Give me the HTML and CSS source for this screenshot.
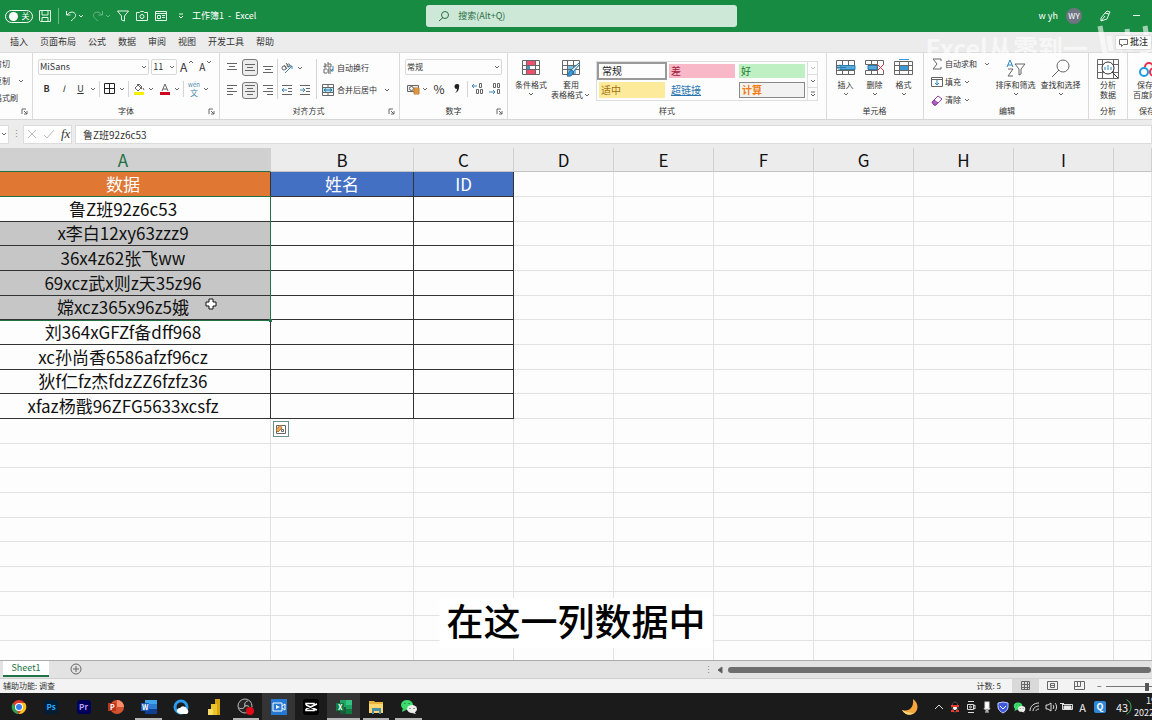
FILE: index.html
```html
<!DOCTYPE html>
<html lang="zh-CN">
<head>
<meta charset="UTF-8">
<title>工作簿1 - Excel</title>
<link rel="stylesheet" href="styles.css">
</head>
<body>

<svg class="defs">
    <symbol id="chev" viewBox="0 0 8 8"><path d="M2 3l2 2 2-2"/></symbol>
    <symbol id="launch" viewBox="0 0 7 7"><path d="M1 6V1h4M3 3l3 3M6 3v3H3"/></symbol>
    <symbol id="wechat" viewBox="0 0 18 18">
        <ellipse cx="7" cy="7" rx="6" ry="5" fill="#3ddb6b" stroke="none"/><path d="M3 10l-1 4 4-2z" fill="#3ddb6b" stroke="none"/>
        <ellipse cx="12" cy="11" rx="5" ry="4" fill="#eee" stroke="none"/><path d="M14 13l2 3-4-1z" fill="#eee" stroke="none"/>
        <path d="M5 5v1M9 5v1M10 10v1M14 10v1" stroke="#145c2c"/>
    </symbol>
</svg>

<header class="titlebar">
    <div class="quick">
        <button class="toggle" aria-label="自动保存"><span class="knob"></span>关</button>
        <button aria-label="保存"><svg width="12" height="12" viewBox="0 0 12 12"><path d="M.5.5h11v11h-10l-1-1zM3 1v4h6V1M3 11V7.500h6V11"/></svg></button>
        <span class="line"></span>
        <button class="undo" aria-label="撤消"><svg width="12" height="12" viewBox="0 0 12 12"><path d="M1.500 1v4h4M2 5c2-3 6-4 8-1.500s-1 5-4 7.500"/></svg><svg class="chev"><use href="#chev"/></svg></button>
        <button class="redo" aria-label="恢复"><svg width="12" height="12" viewBox="0 0 12 12"><path d="M10.500 1v4h-4M10 5C8 2 4 1 2 3.500s1 5 4 7.500"/></svg><svg class="chev"><use href="#chev"/></svg></button>
        <button aria-label="筛选"><svg width="12" height="12" viewBox="0 0 12 12"><path d="M.5 1h11L7.500 6v5l-3-1V6z"/></svg></button>
        <button aria-label="照相机"><svg width="12" height="12" viewBox="0 0 12 12"><path d="M.5 2.500h3l1-1h3l1 1h3v8H.5z"/><circle cx="6" cy="6.500" r="2"/></svg></button>
        <button aria-label="表单"><svg width="12" height="12" viewBox="0 0 12 12"><path d="M.5 1.500h11v9H.5zM.5 3.500h11M2.500 5.500h3v3h-3zM7 5.500h3M7 7.500h3"/></svg></button>
        <button class="more" aria-label="自定义"><svg width="8" height="8" viewBox="0 0 8 8"><path d="M2 2h4M2 4l2 2 2-2"/></svg></button>
        <h1>工作簿1&nbsp; -&nbsp; Excel</h1>
    </div>
    <label class="search">
        <svg width="12" height="12" viewBox="0 0 12 12"><circle cx="7" cy="5" r="3.500"/><path d="M5 7.500L1 11"/></svg>
        <input type="text" placeholder="搜索(Alt+Q)" aria-label="搜索">
    </label>
    <div class="account">
        <span>w yh</span>
        <span class="avatar">WY</span>
        <button aria-label="墨迹"><svg width="12" height="12" viewBox="0 0 12 12"><path d="M2 8l4-5 4 1-2 5-6 2zM6 3l2-2 3 1-1 2M2 11l4-5"/></svg></button>
        <button aria-label="最小化"><svg width="12" height="12" viewBox="0 0 12 12"><path d="M3 5.500h7"/></svg></button>
    </div>
</header>

<nav class="tabs">
    <a href="#">插入</a><a href="#">页面布局</a><a href="#">公式</a><a href="#">数据</a><a href="#">审阅</a><a href="#">视图</a><a href="#">开发工具</a><a href="#">帮助</a>
    <button class="comments"><svg width="9" height="9" viewBox="0 0 9 9"><path d="M.5 1.500h8v5h-4l-2 2v-2h-2z"/></svg>批注</button>
    <div class="watermark">Excel从零到一</div>
    <svg class="bili" width="56" height="40" viewBox="0 0 56 40"><path d="M4 3l5 28M13 13l2 15M31 6l3 22M49 3l4 26M22 14l2 14" /><path d="M10 32h8v5M24 30l4 7M36 30v7M44 31h8"/></svg>
</nav>

<section class="ribbon">
    <div class="group clipboard">
        <div class="body col">
            <button>剪切</button>
            <button>复制<svg class="chev"><use href="#chev"/></svg></button>
            <button>格式刷</button>
        </div>
        <footer><svg class="launch"><use href="#launch"/></svg></footer>
    </div>

    <div class="group font">
        <div class="body">
            <div class="row">
                <label class="drop family"><select aria-label="字体"><option>MiSans</option></select><svg class="chev"><use href="#chev"/></svg></label>
                <label class="drop size"><select aria-label="字号"><option>11</option></select><svg class="chev"><use href="#chev"/></svg></label>
                <button class="tool grow">A<svg class="chev"><path d="M2 4l2-2 2 2"/></svg></button>
                <button class="tool shrink">A<svg class="chev"><path d="M2 2l2 2 2-2"/></svg></button>
            </div>
            <div class="row spaced">
                <span><button class="tool"><b>B</b></button><button class="tool"><i>I</i></button><button class="tool"><u>U</u></button><svg class="chev"><use href="#chev"/></svg></span>
                <span class="line"></span>
                <span><button class="pic" aria-label="边框"><svg width="12" height="12" viewBox="0 0 12 12"><path d="M.5.5h10v10H.5zM5.500.5v10M.5 5.500h10" stroke="#222"/></svg></button><svg class="chev"><use href="#chev"/></svg></span>
                <span class="line"></span>
                <span><button class="pic" aria-label="填充颜色"><svg width="12" height="12" viewBox="0 0 12 12"><path d="M6 1L2 5l3 3 4-4zM4 1l5 5M10 5l1 2"/><path d="M1 9h10v3H1z" fill="#f8f000" stroke="none"/></svg></button><svg class="chev"><use href="#chev"/></svg></span>
                <span><button class="pic" aria-label="字体颜色"><svg width="12" height="12" viewBox="0 0 12 12"><path d="M3 8l3-7 3 7M4 6h4"/><path d="M1 9h10v3H1z" fill="#d0021b" stroke="none"/></svg></button><svg class="chev"><use href="#chev"/></svg></span>
                <span class="line"></span>
                <span><button class="pic wen"><small>wén</small>文</button><svg class="chev"><use href="#chev"/></svg></span>
            </div>
        </div>
        <footer>字体<svg class="launch"><use href="#launch"/></svg></footer>
    </div>

    <div class="group align">
        <div class="body side">
            <div class="three">
                <button aria-label="顶端对齐"><svg width="12" height="12" viewBox="0 0 12 12"><path d="M1 1.500h10M3 4.500h6M1 7.500h10"/></svg></button>
                <button class="on" aria-label="垂直居中"><svg width="12" height="12" viewBox="0 0 12 12"><path d="M1 2.500h10M3 5.500h6M1 8.500h10"/></svg></button>
                <button aria-label="底端对齐"><svg width="12" height="12" viewBox="0 0 12 12"><path d="M1 4.500h10M3 7.500h6M1 10.500h10"/></svg></button>
                <button aria-label="左对齐"><svg width="12" height="12" viewBox="0 0 12 12"><path d="M1 1.500h10M1 4.500h6M1 7.500h10M1 10.500h6"/></svg></button>
                <button class="on" aria-label="居中"><svg width="12" height="12" viewBox="0 0 12 12"><path d="M1 1.500h10M3 4.500h6M1 7.500h10M3 10.500h6"/></svg></button>
                <button aria-label="右对齐"><svg width="12" height="12" viewBox="0 0 12 12"><path d="M1 1.500h10M5 4.500h6M1 7.500h10M5 10.500h6"/></svg></button>
            </div>
            <span class="line tall"></span>
            <div class="two">
                <button aria-label="方向"><svg width="12" height="12" viewBox="0 0 12 12"><circle cx="3" cy="6" r="2"/><path d="M3 3l3 4M5 1l3 4"/><circle cx="7.500" cy="3.500" r="1.500"/><path d="M4 11l7-7M8 4h3v3" stroke="#3b87b5"/></svg></button>
                <svg class="chev"><use href="#chev"/></svg>
                <button aria-label="减少缩进"><svg width="12" height="12" viewBox="0 0 12 12"><path d="M1 1.500h10M7 4.500h4M7 7.500h4M1 10.500h10"/><path d="M6 6H1l2-2M1 6l2 2" stroke="#3b87b5"/></svg></button>
                <button aria-label="增加缩进"><svg width="12" height="12" viewBox="0 0 12 12"><path d="M1 1.500h10M7 4.500h4M7 7.500h4M1 10.500h10"/><path d="M1 6h5L4 4M6 6L4 8" stroke="#3b87b5"/></svg></button>
            </div>
            <span class="line tall"></span>
            <div class="wraps">
                <button><svg width="14" height="12" viewBox="0 0 14 12"><path d="M3 2h2v3H3V4h2M7 0v5h3V2H7M6 7H3v4h3M7 9h3V7H7v4h3"/><path d="M12 4v5h-2l2-2" stroke="#3b87b5"/></svg>自动换行</button>
                <button><svg width="14" height="12" viewBox="0 0 14 12"><path d="M2 3h10v6H2z" fill="#b9e1f2" stroke="none"/><path d="M1.500.5h11v11h-11zM1.500 3.500h11M1.500 8.500h11M7 .5v3M7 8.500v3"/><path d="M3 6h8M5 4.500L3 6l2 1.500M9 4.500L11 6 9 7.500" stroke="#23799f"/></svg>合并后居中<svg class="chev last"><use href="#chev"/></svg></button>
            </div>
        </div>
        <footer>对齐方式<svg class="launch"><use href="#launch"/></svg></footer>
    </div>

    <div class="group number">
        <div class="body">
            <div class="row"><label class="drop format"><select aria-label="数字格式"><option>常规</option></select><svg class="chev"><use href="#chev"/></svg></label></div>
            <div class="row spaced">
                <span><button class="pic" aria-label="会计格式"><svg width="13" height="12" viewBox="0 0 13 12"><path d="M.5 2.500h11v6H.5z" fill="#eee"/><circle cx="4.500" cy="5.500" r="2"/><path d="M7 5h5v6H7z" fill="#f5b25d" stroke="#c27b2b"/><path d="M7 7h5M7 9h5" stroke="#c27b2b"/></svg></button><svg class="chev"><use href="#chev"/></svg></span>
                <button class="tool pct">%</button>
                <button class="tool" aria-label="千位分隔"><svg width="8" height="12" viewBox="0 0 8 12"><path d="M4 1a2 2 0 0 1 2 3c0 3-1 5-4 6 1-1 2-2 2-4a2 2 0 1 1 0-5z" fill="#222" stroke="none"/></svg></button>
                <span class="line"></span>
                <button class="pic" aria-label="增加小数位数"><svg width="12" height="12" viewBox="0 0 12 12"><path d="M8.500.5h2v4h-2zM5.500 6.500h2v4h-2zM9.500 6.500h2v4h-2z"/><path d="M6 3H1l2-2M1 3l2 2" stroke="#3b87b5"/></svg></button>
                <button class="pic" aria-label="减少小数位数"><svg width="12" height="12" viewBox="0 0 12 12"><path d="M5.500.5h2v4h-2zM9.500.5h2v4h-2zM9.500 6.500h2v4h-2z"/><path d="M1 9h6L5 7M7 9l-2 2" stroke="#3b87b5"/></svg></button>
            </div>
        </div>
        <footer>数字<svg class="launch"><use href="#launch"/></svg></footer>
    </div>

    <div class="group styles">
        <div class="body side">
            <button class="tile"><svg width="20" height="18" viewBox="0 0 20 18"><path d="M5 2h9v5H5z" fill="#f0506e" stroke="none"/><path d="M5 7h4v4H5z" fill="#4d8fc7" stroke="none"/><path d="M5 11h10v5H5z" fill="#f0506e" stroke="none"/><path d="M1.500 1.500h17v14h-17zM1.500 6.500h17M1.500 10.500h17M5.500 1.500v14M14.500 1.500v14"/></svg>条件格式<svg class="chev"><use href="#chev"/></svg></button>
            <button class="tile"><svg width="20" height="18" viewBox="0 0 20 18"><path d="M7 7h8v8H7z" fill="#79bde6" stroke="none"/><path d="M1.500 1.500h17v14h-17zM1.500 6.500h17M1.500 10.500h17M6.500 1.500v14M12.500 1.500v14"/><path d="M19 5l-7 8-2-2 8-7z" fill="#e8f4fb" stroke="#2b6f9e"/><path d="M11 11c-3 0-3 4-5 6 4 1 6-1 6-4z" fill="#3b9bd6" stroke="#2b6f9e"/></svg>套用<span>表格格式<svg class="chev"><use href="#chev"/></svg></span></button>
            <div class="gallery">
                <div class="swatches">
                    <button class="normal">常规</button><button class="bad">差</button><button class="good">好</button>
                    <button class="neutral">适中</button><button class="link">超链接</button><button class="calc">计算</button>
                </div>
                <div class="scroller">
                    <button aria-label="上"><svg class="chev dim"><use href="#chev"/></svg></button>
                    <button aria-label="下"><svg class="chev"><use href="#chev"/></svg></button>
                    <button aria-label="其他"><svg width="8" height="8" viewBox="0 0 8 8"><path d="M2 2h4M2 4l2 2 2-2"/></svg></button>
                </div>
            </div>
        </div>
        <footer>样式</footer>
    </div>

    <div class="group cells">
        <div class="body side">
            <button class="tile"><svg width="20" height="18" viewBox="0 0 20 18"><path d="M.5 1.500h18v14H.5zM.5 6.500h18M.5 11.500h18M6.500 1.500v14M12.500 1.500v14"/><path d="M4 6.500h15v4H4z" fill="#55a9dc" stroke="#2b7aa8"/><path d="M10 8.500H1l3-3M1 8.500l3 3" stroke="#2b7aa8"/></svg>插入<svg class="chev"><use href="#chev"/></svg></button>
            <button class="tile"><svg width="20" height="18" viewBox="0 0 20 18"><path d="M.5 5.500v-4h18v4M.5 11.500v4h18v-4M6.500 1.500v14M12.500 1.500v14M.5 5.500h12M.5 11.500h12"/><path d="M3 6.500h9v4H3z" fill="#55a9dc" stroke="#2b7aa8"/><path d="M12 5l7 7M19 5l-7 7" stroke="#d9354a"/></svg>删除<svg class="chev"><use href="#chev"/></svg></button>
            <button class="tile"><svg width="20" height="18" viewBox="0 0 20 18"><path d="M5 .5h10" stroke="#3b9bd6"/><path d="M5 7h10v5H5z" fill="#3b9bd6" stroke="none"/><path d="M.5 2.500h18v13H.5zM.5 6.500h18M.5 11.500h18M5.500 2.500v13M14.500 2.500v13"/></svg>格式<svg class="chev"><use href="#chev"/></svg></button>
        </div>
        <footer>单元格</footer>
    </div>

    <div class="group edit">
        <div class="body side">
            <div class="col">
                <button><svg width="12" height="12" viewBox="0 0 12 12"><path d="M10 3V1H2l4 5-4 5h8V9"/></svg>自动求和<svg class="chev sum"><use href="#chev"/></svg></button>
                <button><svg width="12" height="12" viewBox="0 0 12 12"><path d="M.5 1.500h11v9H.5zM.5 3.500h11"/><path d="M6 4v5M4 7l2 2 2-2" stroke="#2b86c0"/></svg>填充<svg class="chev"><use href="#chev"/></svg></button>
                <button><svg width="12" height="12" viewBox="0 0 12 12"><path d="M1 8l6-6 4 3-6 6H3z" fill="#fff" stroke="#8c3fa0"/><path d="M1 8l2-2 4 3-2 2H3z" fill="#b05cc4" stroke="#8c3fa0"/></svg>清除<svg class="chev"><use href="#chev"/></svg></button>
            </div>
            <button class="tile wide"><svg width="20" height="18" viewBox="0 0 20 18"><path d="M1 8l3-7 3 7M2 6h4" stroke="#2b86c0"/><path d="M2 10h5l-5 7h5M9 5h10l-4 5v5l-2 1v-6z"/></svg>排序和筛选<svg class="chev"><use href="#chev"/></svg></button>
            <button class="tile wide"><svg width="20" height="18" viewBox="0 0 20 18"><circle cx="12" cy="7" r="6"/><path d="M8 11l-7 7"/></svg>查找和选择<svg class="chev"><use href="#chev"/></svg></button>
        </div>
        <footer>编辑</footer>
    </div>

    <div class="group analyse">
        <div class="body side">
            <button class="tile"><svg width="22" height="20" viewBox="0 0 22 20"><path d="M.5.5h21v19H.5zM.5 5.500h21M.5 13.500h21M5.500.5v19M16.500.5v19"/><circle cx="11" cy="9" r="6" fill="#fff" stroke="#333"/><path d="M8 11V8M11 11V6M14 11V8" stroke="#2b86c0"/><path d="M15 13l6 6" stroke="#333"/></svg>分析<span>数据</span></button>
        </div>
        <footer>分析</footer>
    </div>

    <div class="group save">
        <div class="body side">
            <button class="tile"><svg width="22" height="20" viewBox="0 0 22 20"><g stroke-width="2"><circle cx="6" cy="13" r="4" stroke="#1c9be0"/><circle cx="16" cy="13" r="4" stroke="#e5314c"/><path d="M7 8a4 4 0 1 1 8 0" stroke="#e5314c"/></g></svg>保存到<span>百度网盘</span></button>
        </div>
        <footer>保存</footer>
    </div>
</section>

<div class="formula">
    <button class="namebox" aria-label="名称框"><svg class="chev"><use href="#chev"/></svg></button>
    <span class="grip">⋮</span>
    <div class="fx">
        <svg width="10" height="10" viewBox="0 0 10 10"><path d="M1 1l8 8M9 1L1 9"/></svg>
        <svg width="12" height="10" viewBox="0 0 12 10"><path d="M1 6l3 3 7-8"/></svg>
        <button>fx</button>
    </div>
    <input type="text" value="鲁Z班92z6c53" aria-label="编辑栏">
</div>

<main class="sheet">
    <table>
        <colgroup><col class="a"><col class="b"><col span="7" class="c"><col></colgroup>
        <thead>
            <tr><th class="picked">A</th><th>B</th><th>C</th><th>D</th><th>E</th><th>F</th><th>G</th><th>H</th><th>I</th><th></th></tr>
        </thead>
        <tbody id="rows"></tbody>
    </table>
    <p class="caption">在这一列数据中</p>
</main>

<div class="sheetbar">
    <a class="current" href="#">Sheet1</a>
    <button class="add" aria-label="新工作表"><svg width="12" height="12" viewBox="0 0 12 12"><circle cx="6" cy="6" r="5"/><path d="M3 6h6M6 3v6"/></svg></button>
    <div class="hscroll"><span>⋮</span><svg width="6" height="8" viewBox="0 0 6 8"><path d="M5 1v6L1 4z" fill="#555"/></svg><div class="thumb"></div></div>
</div>

<div class="status">
    <span>辅助功能: 调查</span>
    <div class="views">
        <span class="count">计数: 5</span>
        <button class="on" aria-label="普通"><svg width="11" height="10" viewBox="0 0 11 10"><path d="M1.500.5h8v8h-8zM1.500 3.500h8M1.500 6.500h8M4.500.5v8M7.500.5v8"/></svg></button>
        <button aria-label="页面布局"><svg width="11" height="10" viewBox="0 0 11 10"><path d="M.5.5h10v8H.5zM3.500 2.500h4v4h-4zM3.500 4.500h4"/></svg></button>
        <button aria-label="分页预览"><svg width="11" height="10" viewBox="0 0 11 10"><path d="M.5.5h10v8H.5zM3.500.5v5M6.500.5v5M.5 5.500h6"/></svg></button>
        <span class="minus">−</span>
        <div class="zoom"><i></i></div>
    </div>
</div>

<footer class="taskbar">
    <div class="apps">
        <button aria-label="Chrome"><svg width="18" height="18" viewBox="0 0 18 18"><circle cx="9" cy="9" r="7" fill="#e33b2e"/><path d="M3 5l6 11A7 7 0 0 1 3 5z" fill="#2ba24c"/><path d="M9 16A7 7 0 0 0 15 5H9l3 6z" fill="#fbc116"/><circle cx="9" cy="9" r="4" fill="#fff"/><circle cx="9" cy="9" r="3" fill="#3b7ded"/></svg></button>
        <button><span class="adobe ps">Ps</span></button>
        <button><span class="adobe pr">Pr</span></button>
        <button aria-label="PowerPoint"><svg width="18" height="18" viewBox="0 0 18 18"><circle cx="10" cy="9" r="7" fill="#d35230"/><path d="M10 2a7 7 0 0 1 7 7h-7z" fill="#ff8f6b"/><rect x="1" y="5" width="8" height="8" fill="#b7351b"/><text x="3" y="12" class="letter">P</text></svg></button>
        <button class="open" aria-label="Word"><svg width="18" height="18" viewBox="0 0 18 18"><path d="M5 2h12v5H5z" fill="#41a5ee"/><path d="M5 6h12v5H5z" fill="#2b7cd3"/><path d="M5 11h12v5H5z" fill="#103f91"/><rect x="1" y="5" width="8" height="8" fill="#185abd"/><text x="2" y="12" class="letter">W</text></svg></button>
        <button aria-label="QQ浏览器"><svg width="18" height="18" viewBox="0 0 18 18"><circle cx="9" cy="9" r="6" fill="none" stroke="#2a9bea" stroke-width="3"/><path d="M5 14a3 3 0 0 1 3-4 4 4 0 0 1 7 1 3 3 0 0 1 0 5H8z" fill="#fff"/></svg></button>
        <button aria-label="Power BI"><svg width="18" height="18" viewBox="0 0 18 18"><path d="M10 1h5v16h-5z" fill="#d8a511"/><path d="M6 6h6v11H6z" fill="#ecc52c"/><path d="M3 11h5v6H3z" fill="#f9dd62"/></svg></button>
        <button class="open" aria-label="OBS"><svg width="18" height="18" viewBox="0 0 18 18"><circle cx="8" cy="8" r="7" fill="#252525" stroke="#bbb"/><path d="M8 8c-1-3 1-5 3-5M8 8c3-1 5 1 5 3M8 8c-1 3-4 3-6 2" fill="none" stroke="#ccc"/><circle cx="13" cy="13" r="4" fill="#e00b16"/></svg></button>
        <button class="lit" aria-label="录屏"><svg width="18" height="18" viewBox="0 0 18 18"><rect x="1" y="1" width="16" height="16" fill="#2578d4"/><path d="M3 5h9v8H3zM12 8l3-2v6l-3-2" fill="none" stroke="#fff"/><path d="M6 7l4 2-4 2z" fill="#fff"/></svg></button>
        <button aria-label="剪映"><svg width="18" height="18" viewBox="0 0 18 18"><rect x="1" y="1" width="16" height="16" rx="3" fill="#000"/><path d="M4 7V5.500h8V7l3-1M4 11v1.500h8V11l3 1M4 7l11 5M4 11l11-5" fill="none" stroke="#fff" stroke-width="1.500"/></svg></button>
        <button class="lit open" aria-label="Excel"><svg width="18" height="18" viewBox="0 0 18 18"><path d="M5 2h12v14H5z" fill="#21a366"/><path d="M11 2h6v5h-6z" fill="#33c481"/><path d="M11 11h6v5h-6z" fill="#107c41"/><path d="M5 9h6v7H5z" fill="#185c37"/><rect x="1" y="5" width="8" height="8" fill="#107c41"/><text x="3" y="12" class="letter">X</text></svg></button>
        <button class="open" aria-label="资源管理器"><svg width="18" height="18" viewBox="0 0 18 18"><path d="M2 3h5l1 1h8v11H2z" fill="#e8b33c"/><path d="M2 6h14v9H2z" fill="#fcd770"/><path d="M5 10h9v6h-2v-3H7v3H5z" fill="#4a8ea8"/></svg></button>
        <button class="open" aria-label="微信"><svg width="18" height="18"><use href="#wechat"/></svg></button>
    </div>
    <div class="tray">
        <svg class="moon" width="18" height="18" viewBox="0 0 18 18"><path d="M12 1c6 4 6 12 0 15-4 2-9 0-11-4 7 2 12-2 11-11z" fill="#f6a63a"/><path d="M1 12c3 5 8 6 12 3-4 0-8-1-12-3z" fill="#f9d27a"/></svg>
        <svg viewBox="0 0 16 16"><path d="M4 10l4-4 4 4"/></svg>
        <svg viewBox="0 0 16 16"><ellipse cx="8" cy="8" rx="3" ry="5" fill="#111" stroke="#555"/><circle cx="8" cy="9" r="2" fill="#fff" stroke="none"/><path d="M4 7h8M4 12h3M9 12h3" stroke="#e63b2c" stroke-width="2"/></svg>
        <svg viewBox="0 0 16 16"><path d="M5 2.500h6M5 13.500h6M4.500 5.500h6v5h-6zM10 7l2-1v4l-2-1"/><circle cx="7.500" cy="8" r="1"/></svg>
        <svg viewBox="0 0 16 16"><rect x="6" y="3" width="4" height="7" fill="#fff"/><path d="M5 9c1 3 5 3 6 0M8 11v2M6 13h4"/></svg>
        <svg viewBox="0 0 16 16"><path d="M8 3l5 1v4c0 3-3 5-5 6-2-1-5-3-5-6V4z" fill="#3d59dd" stroke="#c4ccff"/><path d="M5 7l3 3 3-3" stroke="#fff"/></svg>
        <svg viewBox="0 0 16 16"><use href="#wechat" x="2" y="2" width="13" height="13"/></svg>
        <svg viewBox="0 0 16 16"><path d="M3 12c0-5 4-8 9-8M6 12c0-3 3-5 6-5M9 12c0-1 1-2 3-2"/></svg>
        <svg viewBox="0 0 16 16"><path d="M3 6h2l3-2v8l-3-2H3zM10 6c1 1 1 3 0 4M12 4c2 2 2 6 0 8"/></svg>
        <svg viewBox="0 0 16 16"><path d="M3.500 5.500h10v5h-10z"/><path d="M5 7h7v3H5z" fill="#eee"/><path d="M1 4.500h4M3.500 4v4"/></svg>
        <span class="ime">A</span>
        <span class="q">Q</span>
        <span class="temp">43<svg viewBox="0 0 22 22"><path d="M16 3a9 9 0 0 1 0 16" stroke="#46c06d"/></svg></span>
        <span class="clock"><span>19</span><span>2022</span></span>
    </div>
</footer>

<script>
const data = ['鲁Z班92z6c53', 'x李白12xy63zzz9', '36x4z62张飞ww', '69xcz武x则z天35z96', '嫦xcz365x96z5娥',
    '刘364xGFZf备dff968', 'xc孙尚香6586afzf96cz', '狄f仁fz杰fdzZZ6fzfz36', 'xfaz杨戬96ZFG5633xcsfz'];
const rows = document.getElementById('rows');
const head = ['数据', '姓名', 'ID'];

for (let r = 0; r < 40; r++) {
    const tr = rows.insertRow();
    for (let c = 0; c < 10; c++) {
        const td = tr.insertCell();
        if (r <= data.length && c < 3) td.classList.add('boxed');
        if (r === 0 && c < 3) {
            td.textContent = head[c];
            td.classList.add(c === 0 ? 'orange' : 'blue');
        } else if (c === 0 && r <= data.length) {
            td.textContent = data[r - 1];
            if (r > 1 && r < 6) td.classList.add('shade');
        }
    }
}

// selection frame, mouse cross and quick analysis button
rows.rows[1].cells[0].insertAdjacentHTML('beforeend', '<div class="selection"></div>');
rows.rows[5].cells[0].insertAdjacentHTML('beforeend', '<svg class="cross" width="12" height="12" viewBox="0 0 12 12"><path d="M4 1h4v3h3v4H8v3H4V8H1V4h3z"/></svg>');
rows.rows[10].cells[1].insertAdjacentHTML('beforeend', '<button class="quickfill" aria-label="自动填充选项"><svg width="12" height="12" viewBox="0 0 12 12"><path d="M1.500 2.500h9v8h-9zM6.500 6.500h2v2h-2z"/><path d="M1 7l4-5 2 3-4 4z" fill="#e9a95e" stroke="#b8772e"/></svg></button>');
</script>

</body>
</html>
```
FILE: styles.css
```css
* {
    box-sizing: border-box;
}
body {
    margin: 0;
    height: 100vh;
    display: flex;
    flex-direction: column;
    overflow: hidden;
    font-family: "Noto Sans CJK SC", sans-serif;
    font-size: 9px;
    line-height: 10px;
    color: #333;
    background: #ececec;
}
button, input, select {
    font: inherit;
    color: inherit;
    border: none;
    background: none;
    padding: 0;
    margin: 0;
}
button {
    display: flex;
    align-items: center;
    justify-content: center;
    white-space: nowrap;
}
a {
    color: inherit;
    text-decoration: none;
}
svg {
    fill: none;
    stroke: #666;
    flex: none;
}
.defs {
    position: absolute;
    width: 0;
    height: 0;
}
.chev {
    width: 8px;
    height: 8px;
}
.dim {
    opacity: 0.4;
}
.line {
    width: 1px;
    height: 16px;
    background: #d4d4d4;
    flex: none;
}

/* title bar */
.titlebar {
    display: grid;
    grid-template-columns: 37% 27% 1fr;
    align-items: center;
    height: 32px;
    flex: none;
    background: #178b41;
    color: #fff;
}
.titlebar svg {
    stroke: #e6f5ea;
}
.quick {
    display: flex;
    align-items: center;
    gap: 7px;
    padding-left: 5px;
}
.quick .line {
    background: #6fb98a;
    margin-right: -1px;
}
.toggle {
    width: 28px;
    height: 13px;
    margin-right: -1px;
    border: 1px solid #fff;
    border-radius: 7px;
    gap: 4px;
    font-size: 8px;
}
.knob {
    width: 9px;
    height: 9px;
    border-radius: 50%;
    background: #fff;
}
.redo {
    opacity: 0.4;
    margin-right: -2px;
}
.more {
    margin: 0 0 0 3px;
}
h1 {
    margin: 0;
    font-size: 9px;
    font-weight: 400;
}
.search {
    display: flex;
    align-items: center;
    gap: 8px;
    height: 22px;
    padding-left: 12px;
    border-radius: 3px;
    background: #cde8d7;
}
.search .titlebar svg, .search svg {
    stroke: #2c6e45;
}
.search input {
    flex: 1;
}
.search input::placeholder {
    color: #2c6e45;
}
.account {
    display: flex;
    align-items: center;
    justify-content: flex-end;
    padding-right: 10px;
}
.account button {
    margin-left: 19px;
}
.avatar {
    width: 16px;
    height: 16px;
    line-height: 16px;
    margin-left: 8px;
    text-align: center;
    border-radius: 50%;
    background: #6e7480;
    font-size: 8px;
}
.account .avatar + button {
    margin-left: 17px;
}

/* ribbon tabs */
.tabs {
    position: relative;
    display: flex;
    align-items: center;
    gap: 12px;
    height: 20px;
    flex: none;
    padding-left: 10px;
    white-space: nowrap;
}
.comments {
    position: relative;
    z-index: 1;
    margin-left: auto;
    width: 37px;
    height: 15px;
    gap: 2px;
    background: #fff;
    border: 1px solid #ddd;
    border-radius: 2px;
    font-weight: 500;
}
.watermark {
    position: absolute;
    right: 64px;
    top: 2px;
    font-size: 25px;
    line-height: 26px;
    font-weight: 700;
    color: #fff;
    opacity: 0.6;
}
.bili {
    position: absolute;
    right: 0;
    top: -9px;
    stroke: #fff;
    stroke-width: 5;
    opacity: 0.6;
}

/* ribbon */
.ribbon {
    display: flex;
    height: 68px;
    flex: none;
    overflow: hidden;
    font-size: 8px;
    background: #fdfdfd;
    border-top: 1px solid #dcdcdc;
    border-bottom: 1px solid #d6d6d6;
}
.group {
    display: flex;
    flex-direction: column;
    flex: none;
    padding: 6px 5px 0;
    position: relative;
    border-right: 1px solid #dadada;
}
.group > footer {
    position: relative;
    margin-top: auto;
    height: 13px;
    text-align: center;
}
.launch {
    position: absolute;
    right: -1px;
    top: 2px;
    width: 7px;
    height: 7px;
}
.body {
    display: flex;
    flex-direction: column;
    gap: 6px;
}
.side {
    flex-direction: row;
    gap: 0;
}
.row {
    display: flex;
    align-items: center;
    height: 16px;
    gap: 2px;
}
.row > span {
    display: flex;
    align-items: center;
}
.col {
    display: flex;
    flex-direction: column;
    gap: 7px;
}
.col button {
    height: 10px;
    gap: 3px;
    justify-content: flex-start;
}
.clipboard {
    width: 33px;
    padding-left: 0;
}
.clipboard .body {
    margin-left: -6px;
}
.clipboard .chev {
    margin-left: 4px;
}
.font {
    width: 187px;
}
.drop {
    position: relative;
    height: 16px;
    border: 1px solid #d8d8d8;
    border-radius: 2px;
}
.drop select {
    appearance: none;
    width: 100%;
    height: 14px;
    padding-left: 1px;
}
.drop .chev {
    position: absolute;
    right: 0;
    top: 3px;
}
.family, .size {
    font-size: 9px;
}
.family {
    width: 114px;
}
.size {
    width: 26px;
}
.format {
    width: 98px;
}
.tool {
    width: 17px;
    height: 16px;
    font-size: 9px;
}
.tool .chev {
    width: 7px;
    align-self: flex-start;
}
.grow {
    font-size: 12px;
}
.shrink {
    font-size: 10px;
}
.pic {
    width: 16px;
    height: 16px;
}
.wen {
    flex-direction: column;
    line-height: 8px;
    font-size: 8px;
    color: #4c8aa8;
}
.wen small {
    font-size: 6px;
    line-height: 8px;
}
.align {
    width: 180px;
    padding-left: 3px;
}
.three {
    display: grid;
    grid-template-columns: 18px 18px 18px;
    gap: 5px 0;
    justify-items: center;
}
.three button {
    width: 16px;
    height: 17px;
}
.three .on {
    border: 1px solid #777;
    border-radius: 3px;
    background: #ececec;
}
.tall {
    height: 40px;
}
.two {
    display: grid;
    grid-template-columns: 18px 18px;
    grid-template-rows: 17px 17px;
    gap: 5px 0;
    padding-right: 2px;
    align-items: center;
}
.wraps {
    display: flex;
    flex-direction: column;
    gap: 5px;
    padding-left: 4px;
}
.wraps button {
    height: 17px;
    gap: 2px;
    justify-content: flex-start;
}
.last {
    margin-left: 4px;
}
.number {
    width: 108px;
}
.tool.pct {
    font-size: 12px;
}
.tile {
    flex-direction: column;
    justify-content: flex-start;
    width: 29px;
}
.tile > svg:first-child {
    margin-bottom: 3px;
}
.tile > span {
    display: flex;
    align-items: center;
}
.tile.wide {
    width: 45px;
}
.styles {
    width: 319px;
}
.styles .tile {
    width: 40px;
}
.styles .tile:first-child {
    width: 36px;
    margin-right: 2px;
}
.gallery {
    display: flex;
    margin: 2px 0 0 5px;
    border: 1px solid #ddd;
    height: 40px;
}
.swatches {
    display: grid;
    grid-template-columns: 70px 70px 70px;
    font-size: 10px;
}
.swatches button {
    justify-content: flex-start;
    margin: 2px;
    padding-left: 2px;
}
.swatches .normal {
    margin: 0;
    padding-left: 3px;
    border: 2px solid #999;
    color: #222;
}
.bad {
    background: #f9b8c8;
    color: #a01835;
}
.good {
    background: #bff0c3;
    color: #1b7a2b;
}
.neutral {
    background: #fdeb9b;
    color: #a07010;
}
.link {
    color: #2a74b0;
    text-decoration: underline;
}
.calc {
    border: 1px solid #888;
    background: #f2f2f2;
    color: #f07d10;
    font-weight: 700;
}
.scroller {
    display: grid;
    width: 10px;
    border-left: 1px solid #ddd;
}
.scroller button + button {
    border-top: 1px solid #ddd;
}
.cells {
    width: 97px;
    padding-left: 4px;
}
.edit {
    width: 165px;
    padding-left: 7px;
}
.edit .col {
    width: 62px;
    gap: 8px;
}
.edit .col button {
    gap: 2px;
}
.sum {
    margin-left: 4px;
}
.analyse, .save {
    width: 39px;
}
.analyse .tile > svg:first-child, .save .tile > svg:first-child {
    margin-bottom: 1px;
}
.save .tile {
    width: 36px;
}

/* formula bar */
.formula {
    display: flex;
    align-items: center;
    height: 28px;
    flex: none;
}
.namebox, .fx, .formula input {
    height: 19px;
    background: #fff;
    border: 1px solid #dcdcdc;
}
.namebox {
    width: 9px;
    border-left: none;
}
.grip {
    width: 14px;
    text-align: center;
    color: #888;
}
.fx {
    display: flex;
    align-items: center;
    gap: 6px;
    width: 49px;
    padding-left: 3px;
}
.fx svg {
    stroke: #bbb;
}
.fx button {
    font: italic 13px "Liberation Serif", serif;
}
.formula input {
    flex: 1;
    margin-left: 3px;
    padding-left: 7px;
    font-size: 10px;
}

/* worksheet */
.sheet {
    position: relative;
    flex: 1;
    min-height: 0;
    overflow: hidden;
    background: #fdfdfd;
}
.sheet table {
    width: calc(100% + 24px);
    margin-left: -24px;
    table-layout: fixed;
    border-collapse: separate;
    border-spacing: 0;
    font-size: 17px;
    line-height: 22px;
    color: #111;
}
.a {
    width: 295px;
}
.b {
    width: 143px;
}
.c {
    width: 100px;
}
th {
    height: 24px;
    padding: 0;
    font-weight: 400;
    background: #ececec;
    border-right: 1px solid #d0d0d0;
    border-bottom: 1px solid #c4c4c4;
}
.picked {
    background: #d0d0d0;
    color: #1f6e43;
    border-bottom-color: #1f6e43;
}
td {
    position: relative;
    height: 25px;
    padding: 0 0 1px;
    text-align: center;
    white-space: nowrap;
    border-right: 1px solid #e2e2e2;
    border-bottom: 1px solid #e2e2e2;
}
tbody tr:nth-child(3n) td {
    height: 24px;
}
.boxed {
    border-color: #333;
}
.orange {
    background: #e07733;
    color: #fff;
}
.blue {
    background: #4470c4;
    color: #fff;
}
.shade {
    background: #c6c6c6;
}
.selection {
    position: absolute;
    z-index: 1;
    top: -1px;
    left: 0;
    right: -1px;
    height: 125px;
    border: 1px solid #217346;
}
.selection::after {
    content: "";
    position: absolute;
    right: -2px;
    bottom: -2px;
    width: 3px;
    height: 3px;
    background: #217346;
}
.cross {
    position: absolute;
    right: 53px;
    top: 2px;
    fill: #fff;
    stroke: #111;
}
.quickfill {
    position: absolute;
    left: 2px;
    top: 2px;
    width: 16px;
    height: 16px;
    background: #fff;
    border: 1px solid #6b8f8a;
}
.caption {
    position: absolute;
    left: 50%;
    bottom: 12px;
    transform: translateX(-50%);
    margin: 0;
    padding: 0 7px 5px;
    font-size: 37px;
    line-height: 45px;
    font-weight: 500;
    color: #000;
    background: #fff;
    white-space: nowrap;
}

/* sheet tabs */
.sheetbar {
    display: flex;
    align-items: flex-start;
    height: 19px;
    flex: none;
    padding-left: 3px;
    background: #e3e3e3;
    border-top: 1px solid #ababab;
    border-bottom: 1px solid #cfcfcf;
}
.current {
    width: 46px;
    height: 16px;
    line-height: 14px;
    text-align: center;
    background: #fff;
    color: #217346;
    border-bottom: 2px solid #217346;
}
.add {
    margin: 2px 0 0 21px;
}
.hscroll {
    display: flex;
    align-items: center;
    gap: 5px;
    width: 39%;
    height: 17px;
    margin-left: auto;
    padding-right: 1px;
}
.hscroll span {
    width: 4px;
    color: #888;
}
.hscroll svg {
    margin-left: 4px;
}
.thumb {
    flex: 1;
    height: 6px;
    border-radius: 3px;
    background: #6e6e6e;
}

/* status bar */
.status {
    display: flex;
    align-items: center;
    justify-content: space-between;
    height: 14px;
    flex: none;
    padding-left: 3px;
    background: #f3f3f3;
    font-size: 8px;
}
.views {
    display: flex;
    align-items: center;
}
.count {
    margin-right: 11px;
}
.views button {
    width: 27px;
    height: 14px;
}
.views .on {
    background: #d9d9d9;
}
.minus {
    width: 13px;
    padding-left: 4px;
}
.zoom {
    position: relative;
    width: 46px;
    height: 1px;
    background: #777;
}
.zoom i {
    position: absolute;
    right: 3px;
    top: -3px;
    width: 4px;
    height: 8px;
    background: #555;
}

/* taskbar */
.taskbar {
    display: flex;
    justify-content: space-between;
    height: 27px;
    flex: none;
    background: #1b1b1b;
    color: #eee;
}
.apps {
    display: flex;
    padding-left: 2px;
}
.apps button {
    position: relative;
    width: 33px;
    height: 27px;
}
.apps button:nth-child(2n) {
    width: 32px;
}
.apps svg, .moon {
    stroke: none;
}
.apps .lit {
    background: #343434;
}
.apps .open::after {
    content: "";
    position: absolute;
    left: 3px;
    right: 3px;
    bottom: 0;
    height: 2px;
    background: #b5b5b5;
}
.apps .lit.open::after {
    left: 0;
    right: 0;
}
.adobe {
    width: 14px;
    height: 14px;
    line-height: 14px;
    border-radius: 3px;
    font-weight: 700;
    font-size: 8px;
}
.ps {
    background: #001e36;
    color: #31a8ff;
}
.pr {
    background: #00005b;
    color: #b9a0ff;
}
.letter {
    font-size: 7px;
    font-weight: 700;
    fill: #fff;
}
.tray {
    display: flex;
    align-items: center;
}
.tray svg {
    width: 16px;
    height: 16px;
    stroke: #ddd;
}
.tray .moon {
    width: 18px;
    height: 18px;
    margin-right: 12px;
    stroke: none;
}
.ime {
    width: 15px;
    text-align: center;
    font-size: 11px;
}
.q {
    width: 12px;
    height: 12px;
    margin: 0 6px 0 4px;
    line-height: 12px;
    text-align: center;
    border-radius: 2px;
    background: #2e86d8;
    font-weight: 700;
    color: #fff;
}
.temp {
    position: relative;
    width: 22px;
    padding-left: 4px;
    font-size: 11px;
}
.tray .temp svg {
    position: absolute;
    left: 0;
    top: -5px;
    width: 20px;
    height: 20px;
}
.clock {
    display: flex;
    flex-direction: column;
    width: 18px;
    line-height: 12px;
    overflow: hidden;
}
.clock span:first-child {
    padding-left: 12px;
}
```
